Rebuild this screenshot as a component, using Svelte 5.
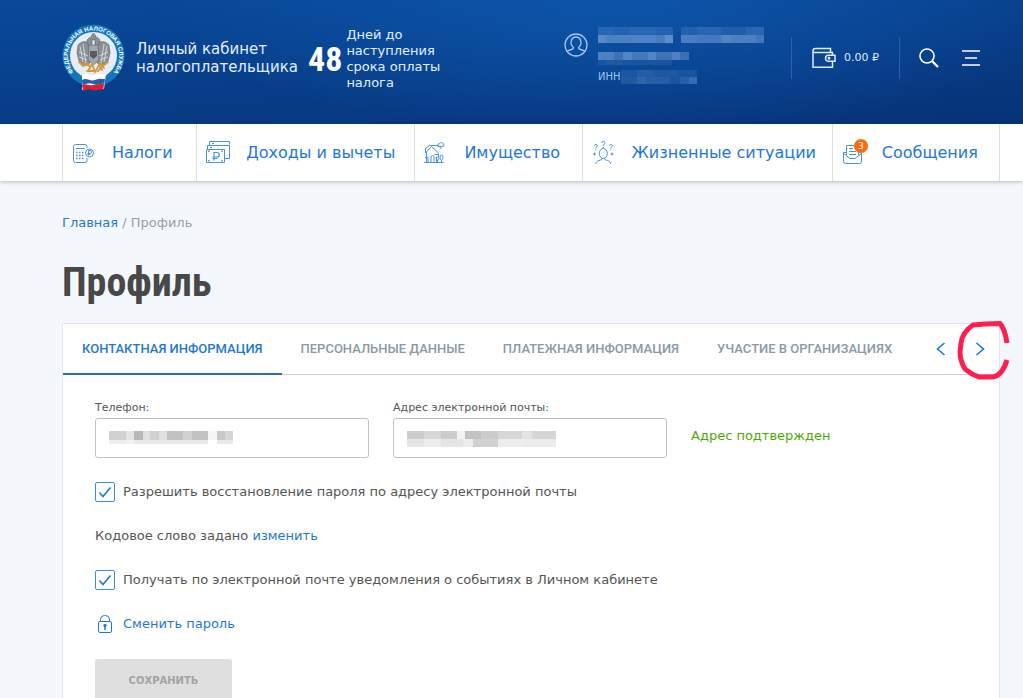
<script lang="ts">
	type MosaicRow = { y: number; h: number; cells: [number, number, number][] };

	const navItems = [
		{ id: 'taxes', label: 'Налоги' },
		{ id: 'income', label: 'Доходы и вычеты' },
		{ id: 'property', label: 'Имущество' },
		{ id: 'life', label: 'Жизненные ситуации' },
		{ id: 'messages', label: 'Сообщения', badge: 3 },
	];

	const tabs = [
		'Контактная информация',
		'Персональные данные',
		'Платежная информация',
		'Участие в организациях',
	];

	let activeTab = $state(0);
	let allowRecovery = $state(true);
	let notifyByEmail = $state(true);
	let phone = $state('');
	let email = $state('');

	// hidden personal data: [x, width, opacity] per cell
	const nameMosaic: MosaicRow[] = [
		{ y: 0, h: 8, cells: [[0, 16, 0.2], [16, 16, 0.16], [32, 26, 0.2], [58, 17, 0.16], [83, 16, 0.16], [99, 24, 0.2], [123, 25, 0.14], [148, 18, 0.22]] },
		{ y: 8, h: 8, cells: [[0, 8, 0.5], [8, 26, 0.43], [34, 24, 0.45], [58, 9, 0.4], [67, 8, 0.54], [83, 16, 0.42], [99, 25, 0.38], [124, 9, 0.48], [133, 25, 0.43], [158, 8, 0.36]] },
		{ y: 25, h: 8, cells: [[0, 16, 0.44], [16, 9, 0.32], [25, 9, 0.48], [34, 16, 0.38], [50, 8, 0.48], [58, 16, 0.34], [74, 8, 0.45], [82, 9, 0.3]] },
		{ y: 33, h: 5, cells: [[0, 8, 0.1], [8, 17, 0.14], [25, 49, 0.1]] },
	];
	const innMosaic: MosaicRow[] = [
		{ y: 0, h: 7, cells: [[0, 16, 0.12], [16, 17, 0.18], [33, 24, 0.14], [57, 19, 0.1]] },
		{ y: 7, h: 7, cells: [[0, 16, 0.16], [16, 9, 0.26], [25, 24, 0.2], [49, 10, 0.12], [59, 9, 0.2], [68, 8, 0.3]] },
	];
	const phoneMosaic: MosaicRow[] = [
		{ y: 0, h: 9, cells: [[0, 17, 0.18], [17, 8, 0.1], [25, 9, 0.28], [34, 7, 0.12], [41, 9, 0.18], [50, 8, 0.12], [58, 16, 0.24], [74, 9, 0.18], [83, 16, 0.24], [99, 9, 0.04], [108, 8, 0.22], [116, 8, 0.16]] },
		{ y: 9, h: 4, cells: [[0, 17, 0.07], [17, 8, 0.05], [25, 74, 0.09], [108, 16, 0.09]] },
	];
	const emailMosaic: MosaicRow[] = [
		{ y: 0, h: 8, cells: [[0, 17, 0.2], [17, 17, 0.16], [34, 16, 0.2], [50, 8, 0.05], [58, 16, 0.24], [74, 17, 0.2], [91, 24, 0.16], [115, 10, 0.11], [125, 24, 0.16]] },
		{ y: 8, h: 8, cells: [[0, 17, 0.1], [17, 17, 0.07], [34, 22, 0.1], [56, 10, 0.07], [66, 25, 0.18], [91, 24, 0.07], [115, 34, 0.08]] },
	];
</script>

{#snippet mosaic(rows: MosaicRow[], w: number, h: number)}
	<svg class="mosaic" width={w} height={h} viewBox="0 0 {w} {h}" shape-rendering="crispEdges" aria-hidden="true">
		{#each rows as row}
			{#each row.cells as [x, cw, o]}
				<rect {x} y={row.y} width={cw} height={row.h} fill="currentColor" fill-opacity={o} />
			{/each}
		{/each}
	</svg>
{/snippet}

{#snippet navIcon(id: string)}
	<svg class="nav-icon" width="26" height="26" viewBox="0 0 26 26" fill="none" stroke="currentColor" stroke-width="1" aria-hidden="true">
		{#if id === 'taxes'}
			<path d="M15 8V6.5a2 2 0 0 0-2-2H3.5a2 2 0 0 0-2 2v14a2 2 0 0 0 2 2H13a2 2 0 0 0 2-2V18M4 8.500h8.500" />
			<path d="M4 12.500h9M4 15.500h9M4 18.500h9" stroke-dasharray="1.500 1.500" stroke-width="1.500" />
			<circle cx="17.500" cy="13" r="4" />
			<path d="M16.500 15.500v-5H18a1.300 1.300 0 0 1 0 3h-2.500M15.500 14.500H18" />
		{:else if id === 'income'}
			<path d="M3.500 5V1.500h20v3M1.500 9.500v-4h22v13H19M6 3.500h2M4 7.500h2" />
			<path d="M.5 9.500h18v13H.5zM2.500 12v-1H4M15 11h1.500v1M2.500 20v1H4M15 21h1.500v-1" />
			<path d="M8 20.500v-8h3a2.200 2.200 0 0 1 0 4.500H6.500M6.500 18.500h5" stroke-width="1.200" />
		{:else if id === 'property'}
			<path d="M1.500 12.500V8.500l4-3h9l3 3.500M1.500 13l6-6.500 7.500 7M2.500 12v10M14.500 14v3M0 22.500h19.500M4 16.500v6M1 17.500h2M7 22v-5a1.500 1.500 0 0 1 3 0v5M12.500 22v-5M10.500 14.500h4" />
			<circle cx="13.500" cy="18.500" r="1.500" /><ellipse cx="17.500" cy="17.500" rx="1.500" ry="2.500" />
			<path d="M17.500 20v2.500M13.500 20v2.500M14 6.500c-1.500-2 .5-3 1.500-2.500.5-2 3.500-2 3.500 0 1.500 0 1.500 2 0 2.500z" />
		{:else if id === 'life'}
			<path d="M4 24c0-2 1-3 3-3.500 2-.5 3-.6 3-2.500M18.500 24c0-2-1-3-3-3.500-2-.5-3-.6-3-2.500" />
			<ellipse cx="11.300" cy="13.500" rx="4" ry="5" />
			<path d="M9.800 3a1.600 1.600 0 1 1 2.200 1.500c-.6.3-.7.6-.7 1.500M2.500 5.800a1.400 1.400 0 1 1 1.800 1.300c-.4.2-.6.5-.6 1.200M17.500 5.800a1.400 1.400 0 1 1 1.800 1.300c-.4.2-.6.5-.6 1.200M11.300 7v1M3.700 9v.8M18.700 9v.8" />
			<path d="M2.500 12.500v3M1 14h3M20 12.500v3M18.500 14h3" />
		{:else}
			<path d="M4.500 15V5.500H13M4.500 12.500h-3v9a2 2 0 0 0 2 2h14a2 2 0 0 0 2-2v-9h-3M16.500 15V10M1.500 13.500l6.500 5h5l6.500-5M7 8.500h4M7 11.500h7M7 14.500h7" />
		{/if}
	</svg>
{/snippet}

<div class="page">
	<header class="header">
		<a class="brand" href="#main">
			<svg class="emblem" width="63" height="68" viewBox="0 0 63 68" aria-hidden="true">
				<defs>
					<path id="ring" d="M13 49.800A25.600 25.600 0 1 1 50 49.800" />
				</defs>
				<circle cx="31.500" cy="31.500" r="31" fill="#1476bd" />
				<circle cx="31.500" cy="31.500" r="23.500" fill="#e6edf4" />
				<text class="ring-text" text-anchor="middle"><textPath href="#ring" startOffset="50%">ФЕДЕРАЛЬНАЯ НАЛОГОВАЯ СЛУЖБА</textPath></text>
				<g fill="#8b9096" stroke="#5c6166" stroke-width=".6">
					<path d="M28 20c-5-5-10-1-12 1l-1 8 2 8 6 5 5-3zM35 20c5-5 10-1 12 1l1 8-2 8-6 5-5-3z" />
					<path d="M26 21l-1-5 3-3 2 4v5zM37 21l1-5-3-3-2 4v5zM29 12l2.500-3 2.500 3-1 4h-3z" />
					<path d="M27 21h9l1 15-5.500 5-5.500-5z" fill="#a2a7ac" />
				</g>
				<g fill="none" stroke="#e2e6e9" stroke-width=".8">
					<path d="M18 22l3 16M21 20l3 19M45 22l-3 16M42 20l-3 19M17 28l9 4M46 28l-9 4M17 33l8 3M46 33l-8 3" />
				</g>
				<path d="M28 27h7v5l-3.500 3-3.500-3z" fill="#565b61" />
				<g fill="none" stroke="#d39b3c" stroke-width="1.800" stroke-linecap="round">
					<path d="M17 38l4 4 6-2M26 47l4-7 3 8 4-7 3 5M46 38l-5 4-5 5M25 47h9M38 39l4 5M22 39l5 3" />
				</g>
				<path d="M20 51c5-3 8 2 13 0s7-1 11-1l-2 15c-5-2-7 2-12 0s-6 0-10 1z" fill="#fff" />
				<path d="M20 56c5-3 8 2 13 0s6-1 10-1l-.6 5c-5-1-6 2-11 0s-7 0-11 1z" fill="#245fac" />
				<path d="M20 61c5-2 6 1 11 0s7-1 11-1l-.8 6c-5-2-7 2-11 0s-6 0-9 1z" fill="#d71f37" />
			</svg>
			<span>Личный кабинет<br />налогоплательщика</span>
		</a>

		<div class="countdown">
			<strong>48</strong>
			<span>Дней до наступления срока оплаты налога</span>
		</div>

		<div class="user">
			<svg width="24" height="24" viewBox="0 0 24 24" fill="none" stroke="currentColor" stroke-width="1.300" aria-hidden="true">
				<circle cx="12" cy="12" r="11" />
				<path d="M3 18.500c1-1 2.500-1.500 4.500-2 1.500-.4 2-1 2-2-4-3-3-10.500 2.500-10.500s6.500 7.500 2.500 10.500c0 1 .5 1.600 2 2 2 .5 3.500 1 4.500 2" />
			</svg>
			<div class="user-data">
				{@render mosaic(nameMosaic, 166, 38)}
				<div class="inn"><span>ИНН</span>{@render mosaic(innMosaic, 76, 14)}</div>
			</div>
		</div>

		<div class="tools">
			<a class="wallet" href="#wallet">
				<svg width="24" height="22" viewBox="0 0 24 22" fill="none" stroke="currentColor" stroke-width="1.500" aria-hidden="true">
					<path d="M20.500 8V5.500H1M20.500 14v6.300H1V4Q1 1.500 3.500 1.500h15V5" />
					<path d="M23 8.300h-6.500a3 3 0 0 0 0 6H23z" />
					<circle cx="17" cy="11.300" r=".7" />
				</svg>
				<span>0.00 ₽</span>
			</a>
			<button type="button" class="search" aria-label="Поиск">
				<svg width="20" height="20" viewBox="0 0 20 20" fill="none" stroke="currentColor" stroke-width="1.600" aria-hidden="true">
					<circle cx="8" cy="8" r="7" />
					<path d="M13 13l6 6" stroke-width="2.300" />
				</svg>
			</button>
			<button type="button" aria-label="Меню">
				<svg width="18" height="18" viewBox="0 0 18 18" fill="none" stroke="currentColor" stroke-width="1.600" aria-hidden="true">
					<path d="M0 2h18M3 9h12M0 16h18" />
				</svg>
			</button>
		</div>
	</header>

	<nav class="nav">
		{#each navItems as item (item.id)}
			<a href="#{item.id}">
				<span class="icon-box">
					{@render navIcon(item.id)}
					{#if item.badge}<span class="badge">{item.badge}</span>{/if}
				</span>
				{item.label}
			</a>
		{/each}
	</nav>

	<main class="main">
		<div class="crumbs"><a href="#main">Главная</a> / Профиль</div>
		<h1>Профиль</h1>

		<section class="card">
			<div class="tabs">
				<div class="tab-list" role="tablist">
					{#each tabs as tab, i}
						<button type="button" role="tab" class="tab" class:active={activeTab === i} aria-selected={activeTab === i} onclick={() => (activeTab = i)}>{tab}</button>
					{/each}
				</div>
				<button type="button" class="arrow" aria-label="Назад">
					<svg width="10" height="14" viewBox="0 0 10 14" fill="none" stroke="currentColor" stroke-width="1.600"><path d="M8.500 1L1.500 7l7 6" /></svg>
				</button>
				<button type="button" class="arrow" aria-label="Вперед">
					<svg width="10" height="14" viewBox="0 0 10 14" fill="none" stroke="currentColor" stroke-width="1.600"><path d="M1.500 1l7 6-7 6" /></svg>
					<svg class="marker" width="54" height="60" viewBox="0 0 54 60" fill="none" stroke="#ff1f4f" stroke-width="5" stroke-linejoin="round" aria-hidden="true">
						<path d="M50 23C49 16 47 8 43 3.500L28 4l-12 1C10 9 5 16 4 23L3 32c0 7 2 12 5 17l7 5 7 3h14c6-1 11-7 14-17" />
					</svg>
				</button>
			</div>

			<form class="form" onsubmit={(e) => e.preventDefault()}>
				<div class="fields">
					<div class="field">
						<label for="phone">Телефон:</label>
						<div class="control">
							<input id="phone" type="tel" bind:value={phone} />
							{#if !phone}<span class="masked">{@render mosaic(phoneMosaic, 124, 16)}</span>{/if}
						</div>
					</div>
					<div class="field">
						<label for="email">Адрес электронной почты:</label>
						<div class="control">
							<input id="email" type="email" bind:value={email} />
							{#if !email}<span class="masked">{@render mosaic(emailMosaic, 149, 16)}</span>{/if}
						</div>
					</div>
					<span class="confirmed">Адрес подтвержден</span>
				</div>

				<label class="check">
					<input type="checkbox" bind:checked={allowRecovery} />
					Разрешить восстановление пароля по адресу электронной почты
				</label>
				<p>Кодовое слово задано <a href="#codeword">изменить</a></p>
				<label class="check">
					<input type="checkbox" bind:checked={notifyByEmail} />
					Получать по электронной почте уведомления о событиях в Личном кабинете
				</label>
				<a class="password" href="#password">
					<svg width="20" height="18" viewBox="0 0 20 18" fill="none" stroke="currentColor" aria-hidden="true">
						<rect x="3.500" y="6.500" width="13" height="11" rx="1.500" />
						<path d="M5.500 6V4.500a4 4 0 0 1 4-4h1a4 4 0 0 1 4 4V6" />
						<circle cx="10" cy="10.500" r="1.200" fill="currentColor" />
						<path d="M10 11v4" stroke-width="1.500" />
					</svg>
					Сменить пароль
				</a>
				<button type="submit" class="save" disabled>Сохранить</button>
			</form>
		</section>
	</main>
</div>

<style>
	:global(body) {
		background: #f4f8fc;
	}

	.page {
		font-family: 'DejaVu Sans', Verdana, sans-serif;
		font-size: 13px;
		line-height: 20px;
		color: #555;
	}

	a {
		color: #1f78cf;
		text-decoration: none;
	}

	button {
		border: none;
		background: none;
		padding: 0;
		color: inherit;
		font-family: inherit;
		cursor: pointer;
	}

	svg {
		display: block;
		flex-shrink: 0;
	}

	.header {
		display: flex;
		align-items: center;
		height: 124px;
		padding: 0 43px 0 62px;
		box-sizing: border-box;
		color: #e4efff;
		background:
			radial-gradient(ellipse 45% 110% at 60% 0, rgba(14, 89, 175, 0.8), transparent),
			linear-gradient(175deg, #084a9c, #073276);
	}

	.brand {
		display: flex;
		align-items: center;
		gap: 11px;
		width: 246px;
		flex-shrink: 0;
		font-size: 15px;
		line-height: 18px;
		color: inherit;
	}

	.emblem {
		margin-bottom: 8px;
	}

	.brand span {
		margin-bottom: 8px;
	}

	.ring-text {
		font: bold 6px 'Liberation Sans', sans-serif;
		fill: #fff;
	}

	.countdown {
		display: flex;
		align-items: center;
		gap: 4px;
		padding-bottom: 6px;
		line-height: 16px;
	}

	.countdown strong {
		font: bold 34px 'Roboto Condensed', Roboto, sans-serif;
		color: #fff;
	}

	.countdown span {
		width: 104px;
	}

	.user {
		display: flex;
		gap: 10px;
		margin-left: auto;
		padding-bottom: 8px;
		color: #a3c4f3;
	}

	.user > svg {
		margin-top: 6px;
	}

	.inn {
		display: flex;
		align-items: center;
		gap: 0;
		height: 24px;
		font-size: 10px;
	}

	.tools {
		display: flex;
		align-items: center;
		gap: 23px;
		height: 42px;
		margin-left: 27px;
		margin-bottom: 8px;
		color: #fff;
	}

	.wallet {
		display: flex;
		align-items: center;
		gap: 8px;
		height: 100%;
		padding: 0 20px;
		margin-right: -4px;
		border-left: 1px solid #2a62ab;
		border-right: 1px solid #2a62ab;
		font-size: 11px;
		color: #dcebff;
	}

	.nav {
		display: grid;
		grid-template-columns: 134fr 218fr 167fr 250fr 168fr;
		padding: 0 23px 0 62px;
		background: #fff;
		box-shadow: 0 1px 4px rgba(0, 0, 0, 0.25);
		position: relative;
	}

	.nav a {
		display: flex;
		align-items: center;
		gap: 14px;
		height: 57px;
		padding-left: 9px;
		border-left: 1px solid #dcdfe3;
		font-size: 16px;
		white-space: nowrap;
	}

	.nav a:last-child {
		border-right: 1px solid #dcdfe3;
	}

	.nav-icon {
		color: #4a92d9;
	}

	.icon-box {
		position: relative;
	}

	.badge {
		position: absolute;
		top: -1px;
		left: 12px;
		width: 14px;
		height: 14px;
		border-radius: 50%;
		background: #ff6a0a;
		color: #fff;
		font-size: 9px;
		line-height: 14px;
		text-align: center;
	}

	.main {
		padding: 32px 23px 0 62px;
	}

	.crumbs {
		color: #999fa5;
	}

	h1 {
		margin: 22px 0 12px;
		font: bold 40px/56px 'Roboto Condensed', Roboto, sans-serif;
		color: #484848;
	}

	.card {
		background: #fff;
		border: 1px solid #e3e7eb;
		border-bottom: none;
	}

	.tabs {
		display: flex;
		height: 50px;
		border-bottom: 1px solid #ccd0d4;
	}

	.tab-list {
		display: flex;
		flex: 1;
		min-width: 0;
	}

	.tab {
		margin-bottom: -1px;
		padding: 0 19px;
		border-bottom: 2px solid transparent;
		font: 500 13px Roboto, sans-serif;
		text-transform: uppercase;
		white-space: nowrap;
		color: #8c99a3;
	}

	.tab.active {
		border-color: #2a6ebb;
		color: #1f78cf;
	}

	.arrow {
		position: relative;
		display: grid;
		place-items: center;
		width: 39px;
		color: #1f78cf;
	}

	.marker {
		position: absolute;
		top: -4px;
		left: -3px;
		pointer-events: none;
	}

	.form {
		padding: 23px 32px 32px;
	}

	.fields {
		display: flex;
		gap: 24px;
	}

	.field {
		width: 274px;
	}

	.field label {
		display: block;
		font-size: 11px;
	}

	.control {
		position: relative;
	}

	.control input {
		display: block;
		width: 100%;
		height: 40px;
		box-sizing: border-box;
		padding: 0 13px;
		border: 1px solid #bfc1c6;
		border-radius: 3px;
		font: inherit;
		color: inherit;
		background: #fff;
	}

	.masked {
		position: absolute;
		top: 13px;
		left: 14px;
		color: #000;
		pointer-events: none;
	}

	.confirmed {
		margin-top: 28px;
		color: #4fa800;
	}

	.check {
		display: flex;
		align-items: center;
		gap: 8px;
		margin-top: 24px;
	}

	.check input {
		appearance: none;
		width: 20px;
		height: 20px;
		margin: 0;
		border: 1px solid #3b8bd9;
		border-radius: 2px;
	}

	.check input:checked {
		background: url("data:image/svg+xml,%3Csvg xmlns='http://www.w3.org/2000/svg' viewBox='0 0 18 18'%3E%3Cpath d='M3.500 9.500l3.500 4 7.500-9' fill='none' stroke='%231f78cf' stroke-width='1.600'/%3E%3C/svg%3E");
	}

	.form p {
		margin: 24px 0 0;
	}

	.password {
		display: flex;
		align-items: center;
		gap: 8px;
		margin-top: 24px;
	}

	.save {
		width: 137px;
		height: 42px;
		margin-top: 25px;
		border-radius: 3px;
		background: #dfdfdf;
		color: #a2a2a2;
		font-size: 10px;
		font-weight: bold;
		text-transform: uppercase;
	}
</style>
